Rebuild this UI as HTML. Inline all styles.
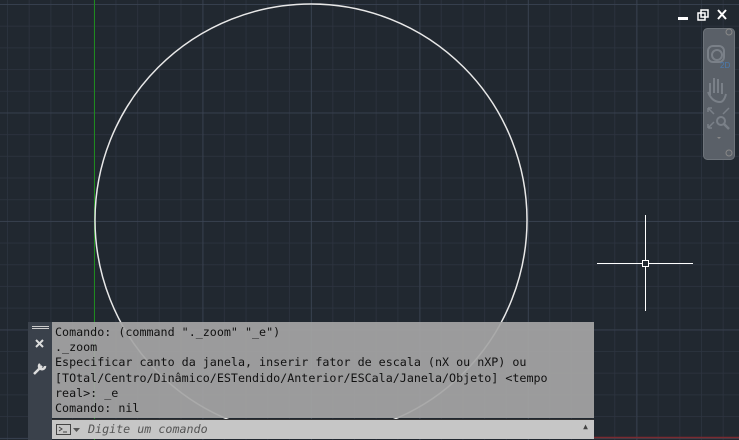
<!DOCTYPE html>
<html><head><style>
body{margin:0;width:739px;height:440px;overflow:hidden;background:#212830;position:relative;font-family:"DejaVu Sans Mono","Liberation Mono",monospace}
.grid{position:absolute;inset:0;background-image:
linear-gradient(to right,rgba(62,72,88,.6) 1px,transparent 1px),
linear-gradient(to bottom,rgba(62,72,88,.6) 1px,transparent 1px),
linear-gradient(to right,rgba(45,52,64,.8) 1px,transparent 1px),
linear-gradient(to bottom,rgba(45,52,64,.8) 1px,transparent 1px);
background-size:108.5px 108.5px,108.5px 108.5px,21.7px 21.7px,21.7px 21.7px;
background-position:94px 4px,94px 4px,7px 4px,7px 4px}
.cmd{position:absolute;left:52px;top:322px;width:542px;height:96px;background:rgba(165,165,165,.93);font-size:11.7px;color:#111;line-height:15.2px;padding:3px 0 0 3px;box-sizing:border-box;white-space:pre}
.grip{position:absolute;left:28px;top:322px;width:24px;height:118px;background:#3a414b}
.inp{position:absolute;left:52px;top:419px;width:542px;height:19px;background:#c6c6c6;border-top:1px solid #333}
</style></head><body>
<div class="grid"></div>
<div style="position:absolute;left:94px;top:0;width:1px;height:440px;background:#1f8a1f"></div>
<svg width="739" height="440" style="position:absolute;left:0;top:0">
<circle cx="311" cy="220" r="216" fill="none" stroke="#e8e8e8" stroke-width="1.5"/>
<line x1="597" y1="263.5" x2="693" y2="263.5" stroke="#fff"/>
<line x1="645.5" y1="215" x2="645.5" y2="311" stroke="#fff"/>
<rect x="642.5" y="260.5" width="6" height="6" fill="#212830" stroke="#fff"/>
<line x1="594" y1="437.5" x2="739" y2="437.5" stroke="#7a2a30" stroke-width="1.5"/>
<rect x="678" y="17" width="10" height="3" fill="#fff"/>
<rect x="698" y="13" width="7" height="7" fill="none" stroke="#fff" stroke-width="1.5"/>
<rect x="701" y="10" width="7" height="7" fill="none" stroke="#fff" stroke-width="1.5"/>
<path d="M718 10l8 9M726 10l-8 9" stroke="#fff" stroke-width="2"/>
<rect x="703.5" y="28.5" width="31" height="131" rx="4" fill="#5a6068" stroke="#6e747b"/>
<circle cx="729" cy="32" r="3" fill="none" stroke="#888" />
<rect x="708" y="46" width="16" height="16" rx="5" fill="none" stroke="#7a8088" stroke-width="2"/>
<circle cx="717" cy="55" r="5" fill="none" stroke="#7a8088" stroke-width="2"/>
<text x="720" y="68" font-size="8" fill="#4a7ab0" font-family="Liberation Sans">2D</text>
<path d="M710 95v-12M714 93v-15M718 93v-14M722 94v-11M708 92q4 10 12 10q4 0 6-8" fill="none" stroke="#7a8088" stroke-width="2"/>
<path d="M708 108l6 6M708 108v4M708 108h4M729 108l-6 6M708 128l6-6M708 128v-4M708 128h4" stroke="#7a8088" stroke-width="1.5" fill="none"/>
<circle cx="721" cy="121" r="4" fill="none" stroke="#7a8088" stroke-width="2"/>
<path d="M724 124l5 5" stroke="#7a8088" stroke-width="2.5"/>
<path d="M717 137l2 2 2-2z" fill="#888"/>
<circle cx="729" cy="153" r="3" fill="none" stroke="#888"/>
</svg>
<div class="grip"></div>
<svg width="24" height="60" style="position:absolute;left:28px;top:322px">
<g fill="#ccc"><rect x="4" y="4" width="17" height="1"/><rect x="4" y="6" width="17" height="1"/></g>
<path d="M8 18l7 7M15 18l-7 7" stroke="#ddd" stroke-width="2"/>
<path d="M6 52l8-8M12 42a3 3 0 1 0 5 2" stroke="#ddd" stroke-width="2.5" fill="none"/>
</svg>
<div class="cmd">Comando: (command "._zoom" "_e")
._zoom
Especificar canto da janela, inserir fator de escala (nX ou nXP) ou
[TOtal/Centro/Dinâmico/ESTendido/Anterior/ESCala/Janela/Objeto] &lt;tempo
real&gt;: _e
Comando: nil</div>
<div class="inp">
<svg width="40" height="18" style="position:absolute;left:3px;top:1px"><rect x="1.5" y="3.5" width="14" height="10" fill="none" stroke="#444"/><path d="M4 6l3 2-3 2M8 11h4" stroke="#444" fill="none"/><path d="M18 7h7l-3.5 4z" fill="#555"/></svg>
<span style="position:absolute;left:36px;top:2px;font-size:11.7px;font-style:italic;color:#555">Digite um comando</span>
<span style="position:absolute;right:6px;top:2px;font-size:8px;color:#444">▲</span>
</div>
</body></html>
